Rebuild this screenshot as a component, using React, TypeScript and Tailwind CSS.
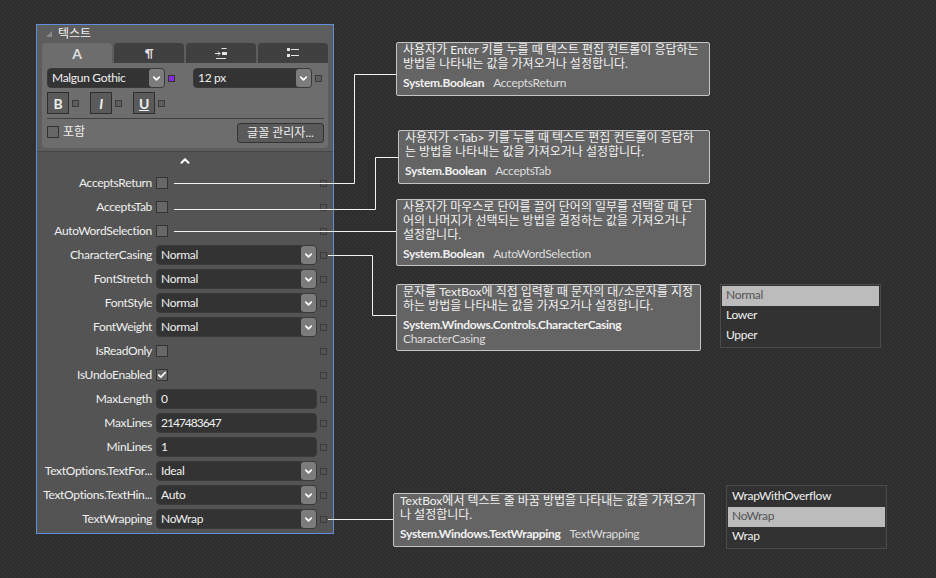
import { Check, ChevronDown, ChevronUp } from 'lucide-react'

type Row =
  | { label: string; kind: 'check'; checked?: boolean }
  | { label: string; kind: 'select' | 'input'; value: string }

const rows: Row[] = [
  { label: 'AcceptsReturn', kind: 'check' },
  { label: 'AcceptsTab', kind: 'check' },
  { label: 'AutoWordSelection', kind: 'check' },
  { label: 'CharacterCasing', kind: 'select', value: 'Normal' },
  { label: 'FontStretch', kind: 'select', value: 'Normal' },
  { label: 'FontStyle', kind: 'select', value: 'Normal' },
  { label: 'FontWeight', kind: 'select', value: 'Normal' },
  { label: 'IsReadOnly', kind: 'check' },
  { label: 'IsUndoEnabled', kind: 'check', checked: true },
  { label: 'MaxLength', kind: 'input', value: '0' },
  { label: 'MaxLines', kind: 'input', value: '2147483647' },
  { label: 'MinLines', kind: 'input', value: '1' },
  { label: 'TextOptions.TextFor...', kind: 'select', value: 'Ideal' },
  { label: 'TextOptions.TextHin...', kind: 'select', value: 'Auto' },
  { label: 'TextWrapping', kind: 'select', value: 'NoWrap' },
]

function Marker({ className = '' }: { className?: string }) {
  return <div className={`w-[7px] h-[7px] shrink-0 border border-[#3c3c3c] ${className}`} />
}

function CheckBox({ checked }: { checked?: boolean }) {
  return (
    <div className="w-[12px] h-[12px] flex items-center justify-center border border-[#333333] bg-[#676767]">
      {checked && <Check className="w-[10px] h-[10px] text-white" strokeWidth={4} />}
    </div>
  )
}

function Select({ value, className = '' }: { value: string; className?: string }) {
  return (
    <div className={`h-[20px] flex items-center justify-between rounded-[4px] bg-[#333333] pl-[4px] border border-[#3a3a3a] text-[#f0f0f0] ${className}`}>
      <span>{value}</span>
      <div className="w-[15px] h-[18px] rounded-[3px] bg-[#7c7c7c] flex items-center justify-center">
        <ChevronDown className="w-[11px] h-[11px] text-white" strokeWidth={3.5} />
      </div>
    </div>
  )
}

function StyleButton({ children }: { children: React.ReactNode }) {
  return (
    <div className="w-[22px] h-[22px] flex items-center justify-center border border-[#2e2e2e] bg-[#5a5a5a] text-[#eeeeee] text-[14px] font-bold">
      {children}
    </div>
  )
}

function Tab({ active, children }: { active?: boolean; children: React.ReactNode }) {
  return (
    <div className={`h-[20px] flex items-center justify-center rounded-t-[4px] text-[#dddddd] ${active ? 'bg-[#6d6d6d]' : 'bg-[#404040]'}`}>
      {children}
    </div>
  )
}

function Tooltip({ className, lines, type, name, stacked }: { className: string; lines: string[]; type: string; name: string; stacked?: boolean }) {
  return (
    <div className={`absolute rounded-[2px] border border-[#c4c4c4] bg-[#646464] px-[6px] text-[#f2f2f2] whitespace-nowrap leading-[14px] ${className}`}>
      {lines.map(l => (
        <div key={l} className="tracking-normal">{l}</div>
      ))}
      <div className={`mt-[5px] ${stacked ? '' : 'flex gap-[9px]'}`}>
        <div className="font-bold">{type}</div>
        <div className="text-[#dedede]">{name}</div>
      </div>
    </div>
  )
}

function ListBox({ className, items, selected }: { className: string; items: string[]; selected: string }) {
  return (
    <div className={`absolute w-[161px] border border-[#4a4a4a] bg-[#323232] p-[1px] ${className}`}>
      {items.map(item => (
        <div key={item} className={`h-[20px] px-[4px] pb-[3px] flex items-center ${item === selected ? 'bg-[#bcbcbc] text-[#555555]' : 'text-[#f0f0f0]'}`}>
          {item}
        </div>
      ))}
    </div>
  )
}

export default function App() {
  return (
    <div className="relative w-[936px] h-[578px] overflow-hidden bg-[repeating-conic-gradient(#323232_0_25%,#2d2d2d_0_50%)] bg-[length:4px_4px] text-[12px] tracking-[-0.3px] font-['Lato','Noto_Sans_CJK_KR',sans-serif]">
      {/* Property panel */}
      <div className="absolute left-[36px] top-[24px] w-[298px] h-[510px] border border-[#5f8fdc] bg-[#545454]">
        <div className="h-[127px] bg-[#5d5d5d] border-b border-[#474747]">
          <div className="h-[18px] flex items-center gap-[6px] pl-[9px] text-[#f0f0f0]">
            <div className="w-0 h-0 border-l-[6px] border-l-transparent border-b-[6px] border-b-[#8a8a8a]" />
            <span className="tracking-normal">텍스트</span>
          </div>
          <div className="mx-[5px]">
            <div className="grid grid-cols-4 gap-[2px]">
              <Tab active><span className="text-[14px] font-bold">A</span></Tab>
              <Tab><span className="text-[12px] font-bold">¶</span></Tab>
              <Tab>
                <svg width="13" height="11" viewBox="0 0 13 11" fill="none" stroke="#e4e4e4" strokeWidth="1">
                  <path d="M0 5.5h5M3 3.5l2 2-2 2M1 10.5h10M6.5 0.5h5" />
                  <rect x="7" y="4" width="5" height="3" fill="#e4e4e4" stroke="none" />
                </svg>
              </Tab>
              <Tab>
                <svg width="13" height="10" viewBox="0 0 13 10" fill="#e4e4e4">
                  <rect x="0" y="0" width="3" height="3" />
                  <rect x="0" y="6" width="3" height="3" />
                  <rect x="4" y="1" width="8" height="1" />
                  <rect x="4" y="7" width="8" height="1" />
                </svg>
              </Tab>
            </div>
            <div className="h-[85px] bg-[#6d6d6d] rounded-b-[4px] px-[5px] pt-[5px]">
              <div className="flex items-center">
                <Select value="Malgun Gothic" className="w-[118px]" />
                <div className="ml-[3px] w-[7px] h-[7px] bg-[#8a2be2] border border-[#333333]" />
                <Select value="12 px" className="ml-[18px] w-[119px]" />
                <Marker className="ml-[3px] bg-[#5e5e5e]" />
              </div>
              <div className="flex items-center mt-[4px]">
                <StyleButton>B</StyleButton>
                <Marker className="ml-[3px] bg-[#5e5e5e]" />
                <div className="ml-[11px]"><StyleButton><span className="italic">I</span></StyleButton></div>
                <Marker className="ml-[3px] bg-[#5e5e5e]" />
                <div className="ml-[11px]"><StyleButton><span className="underline">U</span></StyleButton></div>
                <Marker className="ml-[3px] bg-[#5e5e5e]" />
              </div>
              <div className="mt-[4px] border-t border-[#404040] flex items-center justify-between w-[277px] pt-[4px]">
                <div className="flex items-center gap-[4px] text-[#f0f0f0] -mt-[3px] tracking-normal">
                  <CheckBox />
                  <span>포함</span>
                </div>
                <div className="w-[87px] h-[20px] rounded-[3px] border border-[#333333] bg-[#5a5a5a] flex items-center justify-center text-[#f0f0f0] tracking-normal">
                  글꼴 관리자...
                </div>
              </div>
            </div>
          </div>
        </div>
        <div className="h-[19px] pb-[2px] flex items-center justify-center">
          <ChevronUp className="w-[14px] h-[14px] text-white" strokeWidth={3.5} />
        </div>
        {rows.map(row => (
          <div key={row.label} className="h-[24px] flex items-center">
            <div className="w-[115px] text-right text-[#f0f0f0] whitespace-nowrap">{row.label}</div>
            <div className="ml-[4px] w-[161px]">
              {row.kind === 'check' && <CheckBox checked={row.checked} />}
              {row.kind === 'select' && <Select value={row.value} />}
              {row.kind === 'input' && (
                <div className="h-[20px] flex items-center rounded-[4px] bg-[#333333] pl-[4px] border border-[#3a3a3a] text-[#f0f0f0] tracking-[-1px]">{row.value}</div>
              )}
            </div>
            <Marker className="ml-[3px]" />
          </div>
        ))}
      </div>

      {/* Connector lines */}
      <svg className="absolute inset-0" width="936" height="578" fill="none" stroke="#f2f2f2" strokeWidth="1">
        <path d="M174 183.5H354.5V74.5H396" />
        <path d="M174 209.5H375.5V157.5H398" />
        <path d="M174 231.5H396" />
        <path d="M328 255.5H372.5V315.5H396" />
        <path d="M328 519.5H393" />
      </svg>

      <Tooltip
        className="left-[396px] top-[42px] w-[314px] h-[54px]"
        lines={['사용자가 Enter 키를 누를 때 텍스트 편집 컨트롤이 응답하는', '방법을 나타내는 값을 가져오거나 설정합니다.']}
        type="System.Boolean"
        name="AcceptsReturn"
      />
      <Tooltip
        className="left-[398px] top-[130px] w-[312px] h-[54px]"
        lines={['사용자가 <Tab> 키를 누를 때 텍스트 편집 컨트롤이 응답하', '는 방법을 나타내는 값을 가져오거나 설정합니다.']}
        type="System.Boolean"
        name="AcceptsTab"
      />
      <Tooltip
        className="left-[396px] top-[199px] w-[310px] h-[67px]"
        lines={['사용자가 마우스로 단어를 끌어 단어의 일부를 선택할 때 단', '어의 나머지가 선택되는 방법을 결정하는 값을 가져오거나', '설정합니다.']}
        type="System.Boolean"
        name="AutoWordSelection"
      />
      <Tooltip
        className="left-[396px] top-[284px] w-[305px] h-[67px]"
        lines={['문자를 TextBox에 직접 입력할 때 문자의 대/소문자를 지정', '하는 방법을 나타내는 값을 가져오거나 설정합니다.']}
        type="System.Windows.Controls.CharacterCasing"
        name="CharacterCasing"
        stacked
      />
      <Tooltip
        className="left-[393px] top-[493px] w-[312px] h-[54px]"
        lines={['TextBox에서 텍스트 줄 바꿈 방법을 나타내는 값을 가져오거', '나 설정합니다.']}
        type="System.Windows.TextWrapping"
        name="TextWrapping"
      />

      <ListBox className="left-[720px] top-[284px]" items={['Normal', 'Lower', 'Upper']} selected="Normal" />
      <ListBox className="left-[726px] top-[485px]" items={['WrapWithOverflow', 'NoWrap', 'Wrap']} selected="NoWrap" />
    </div>
  )
}
